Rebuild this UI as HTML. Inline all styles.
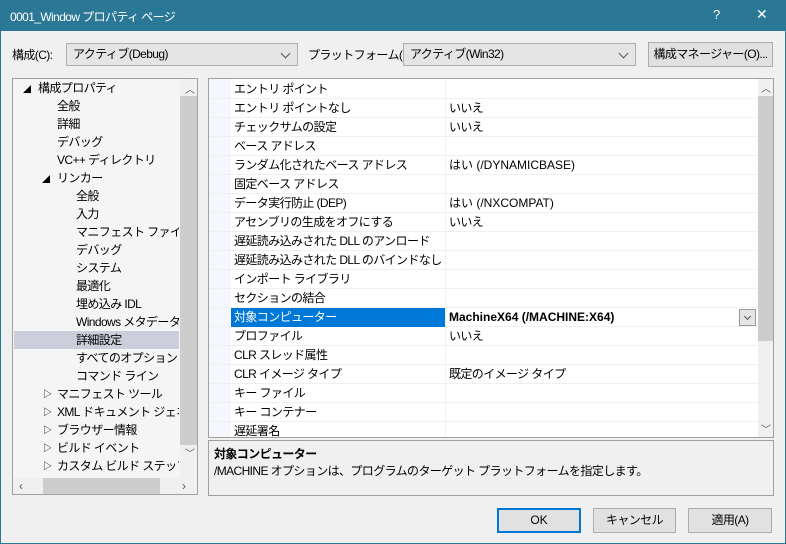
<!DOCTYPE html>
<html><head><meta charset="utf-8"><style>
*{margin:0;padding:0;box-sizing:border-box}
body{width:786px;height:544px;overflow:hidden;background:#2b7896;font-family:"Liberation Sans","Noto Sans CJK JP",sans-serif;font-size:12px;color:#000;position:relative}
.a{position:absolute}
#win{left:1px;top:31px;width:784px;height:512px;background:#f0f0f0}
.combo{height:23px;border:1px solid #adadad;background:#e5e5e5;padding-left:6px;line-height:21px}
.chev{position:absolute;right:8px;top:6px;width:7px;height:7px;border-right:1px solid #555;border-bottom:1px solid #555;transform:rotate(45deg)}
.btn{border:1px solid #adadad;background:#e1e1e1;text-align:center;line-height:23px;height:25px}
.tr{position:absolute;height:18px;line-height:18px;white-space:nowrap;letter-spacing:-0.6px}
.row{position:absolute;left:0;width:549px;height:19px;border-bottom:1px solid #f0f0f0}
.row .n{position:absolute;left:22px;width:215px;height:19px;line-height:18px;padding-left:3px;border-right:1px solid #f0f0f0;white-space:nowrap;overflow:hidden;letter-spacing:-0.6px}
.row .v{position:absolute;left:237px;height:19px;line-height:18px;padding-left:3px;white-space:nowrap}
.j{letter-spacing:-0.6px}
</style></head><body>
<div class="a j" style="left:10px;top:8px;color:#fff;font-size:12px">0001_Window プロパティ ページ</div>
<div class="a" style="left:713px;top:7px;color:#fff;font-size:13px">?</div>
<div class="a" style="left:756px;top:6px;color:#fff;font-size:14px">✕</div>
<div id="win" class="a"></div>
<div class="a j" style="left:12px;top:46px">構成(C):</div>
<div class="a combo j" style="left:66px;top:43px;width:232px">アクティブ(Debug)<span class="chev"></span></div>
<div class="a j" style="left:308px;top:46px">プラットフォーム(P):</div>
<div class="a combo j" style="left:403px;top:43px;width:233px">アクティブ(Win32)<span class="chev"></span></div>
<div class="a btn j" style="left:648px;top:42px;width:125px">構成マネージャー(O)...</div>

<!-- tree -->
<div class="a" style="left:12px;top:78px;width:186px;height:417px;border:1px solid #a0a0a0;background:#f5f5f5;overflow:hidden">
<div class="a" style="left:1px;top:252px;width:165px;height:18px;background:#cccedb"></div>
<div class="a" style="left:0;top:0;width:166px;height:399px;overflow:hidden">
<div class="tr" style="left:10px;top:0"><span style="font-size:8px">◢</span></div><div class="tr" style="left:25px;top:0">構成プロパティ</div>
<div class="tr" style="left:44px;top:18px">全般</div>
<div class="tr" style="left:44px;top:36px">詳細</div>
<div class="tr" style="left:44px;top:54px">デバッグ</div>
<div class="tr" style="left:44px;top:72px">VC++ ディレクトリ</div>
<div class="tr" style="left:29px;top:90px"><span style="font-size:8px">◢</span></div><div class="tr" style="left:44px;top:90px">リンカー</div>
<div class="tr" style="left:63px;top:108px">全般</div>
<div class="tr" style="left:63px;top:126px">入力</div>
<div class="tr" style="left:63px;top:144px">マニフェスト ファイル</div>
<div class="tr" style="left:63px;top:162px">デバッグ</div>
<div class="tr" style="left:63px;top:180px">システム</div>
<div class="tr" style="left:63px;top:198px">最適化</div>
<div class="tr" style="left:63px;top:216px">埋め込み IDL</div>
<div class="tr" style="left:63px;top:234px">Windows メタデータ</div>
<div class="tr" style="left:63px;top:252px">詳細設定</div>
<div class="tr" style="left:63px;top:270px">すべてのオプション</div>
<div class="tr" style="left:63px;top:288px">コマンド ライン</div>
<div class="tr" style="left:30px;top:306px;font-size:9px">▷</div><div class="tr" style="left:44px;top:306px">マニフェスト ツール</div>
<div class="tr" style="left:30px;top:324px;font-size:9px">▷</div><div class="tr" style="left:44px;top:324px">XML ドキュメント ジェネレーター</div>
<div class="tr" style="left:30px;top:342px;font-size:9px">▷</div><div class="tr" style="left:44px;top:342px">ブラウザー情報</div>
<div class="tr" style="left:30px;top:360px;font-size:9px">▷</div><div class="tr" style="left:44px;top:360px">ビルド イベント</div>
<div class="tr" style="left:30px;top:378px;font-size:9px">▷</div><div class="tr" style="left:44px;top:378px">カスタム ビルド ステップ</div>
</div>
<div class="a" style="left:167px;top:0;width:17px;height:399px;background:#f0f0f0"></div>
<div class="a" style="left:167px;top:17px;width:17px;height:349px;background:#cdcdcd"></div>
<div class="a" style="left:172px;top:2px;font-size:10px;color:#555">︿</div>
<div class="a" style="left:172px;top:366px;font-size:10px;color:#555">﹀</div>
<div class="a" style="left:0;top:399px;width:184px;height:16px;background:#f0f0f0"></div>
<div class="a" style="left:30px;top:399px;width:117px;height:16px;background:#cdcdcd"></div>
<div class="a" style="left:6px;top:399px;color:#555;line-height:16px">‹</div>
<div class="a" style="left:169px;top:399px;color:#555;line-height:16px">›</div>
</div>

<!-- grid -->
<div class="a" style="left:208px;top:78px;width:566px;height:360px;border:1px solid #a0a0a0;background:#fff;overflow:hidden">
<div class="a" style="left:0;top:0;width:22px;height:358px;background:#f5f7fc"></div>
<div class="a" style="left:549px;top:0;width:15px;height:358px;background:#f0f0f0"></div>
<div class="a" style="left:549px;top:17px;width:15px;height:245px;background:#cdcdcd"></div>
<div class="a" style="left:552px;top:1px;font-size:10px;color:#555">︿</div>
<div class="a" style="left:552px;top:342px;font-size:10px;color:#555">﹀</div>
<div class="a" style="left:0;top:1px">
<div class="row" style="top:0"><div class="n">エントリ ポイント</div><div class="v"></div></div>
<div class="row" style="top:19px"><div class="n">エントリ ポイントなし</div><div class="v j">いいえ</div></div>
<div class="row" style="top:38px"><div class="n">チェックサムの設定</div><div class="v j">いいえ</div></div>
<div class="row" style="top:57px"><div class="n">ベース アドレス</div><div class="v"></div></div>
<div class="row" style="top:76px"><div class="n">ランダム化されたベース アドレス</div><div class="v">はい (/DYNAMICBASE)</div></div>
<div class="row" style="top:95px"><div class="n">固定ベース アドレス</div><div class="v"></div></div>
<div class="row" style="top:114px"><div class="n">データ実行防止 (DEP)</div><div class="v">はい (/NXCOMPAT)</div></div>
<div class="row" style="top:133px"><div class="n">アセンブリの生成をオフにする</div><div class="v j">いいえ</div></div>
<div class="row" style="top:152px"><div class="n">遅延読み込みされた DLL のアンロード</div><div class="v"></div></div>
<div class="row" style="top:171px"><div class="n">遅延読み込みされた DLL のバインドなし</div><div class="v"></div></div>
<div class="row" style="top:190px"><div class="n">インポート ライブラリ</div><div class="v"></div></div>
<div class="row" style="top:209px"><div class="n">セクションの結合</div><div class="v"></div></div>
<div class="row" style="top:228px"><div class="n" style="background:#0078d7;color:#fff">対象コンピューター</div><div class="v" style="font-weight:bold;width:312px">MachineX64 (/MACHINE:X64)<span class="a" style="left:293px;top:1px;width:17px;height:17px;border:1px solid #999;background:#e5e5e5"><span class="chev" style="right:5px;top:4px;width:5px;height:5px"></span></span></div></div>
<div class="row" style="top:247px"><div class="n">プロファイル</div><div class="v j">いいえ</div></div>
<div class="row" style="top:266px"><div class="n">CLR スレッド属性</div><div class="v"></div></div>
<div class="row" style="top:285px"><div class="n">CLR イメージ タイプ</div><div class="v j">既定のイメージ タイプ</div></div>
<div class="row" style="top:304px"><div class="n">キー ファイル</div><div class="v"></div></div>
<div class="row" style="top:323px"><div class="n">キー コンテナー</div><div class="v"></div></div>
<div class="row" style="top:342px"><div class="n">遅延署名</div><div class="v"></div></div>
</div>
</div>

<div class="a" style="left:208px;top:440px;width:566px;height:56px;border:1px solid #a0a0a0;background:#f0f0f0">
<div class="a j" style="left:5px;top:4px;font-weight:bold">対象コンピューター</div>
<div class="a j" style="left:5px;top:21px">/MACHINE オプションは、プログラムのターゲット プラットフォームを指定します。</div>
</div>

<div class="a btn" style="left:497px;top:508px;width:84px;border:2px solid #0078d7;line-height:21px">OK</div>
<div class="a btn j" style="left:593px;top:508px;width:83px">キャンセル</div>
<div class="a btn j" style="left:688px;top:508px;width:84px">適用(A)</div>
</body></html>
